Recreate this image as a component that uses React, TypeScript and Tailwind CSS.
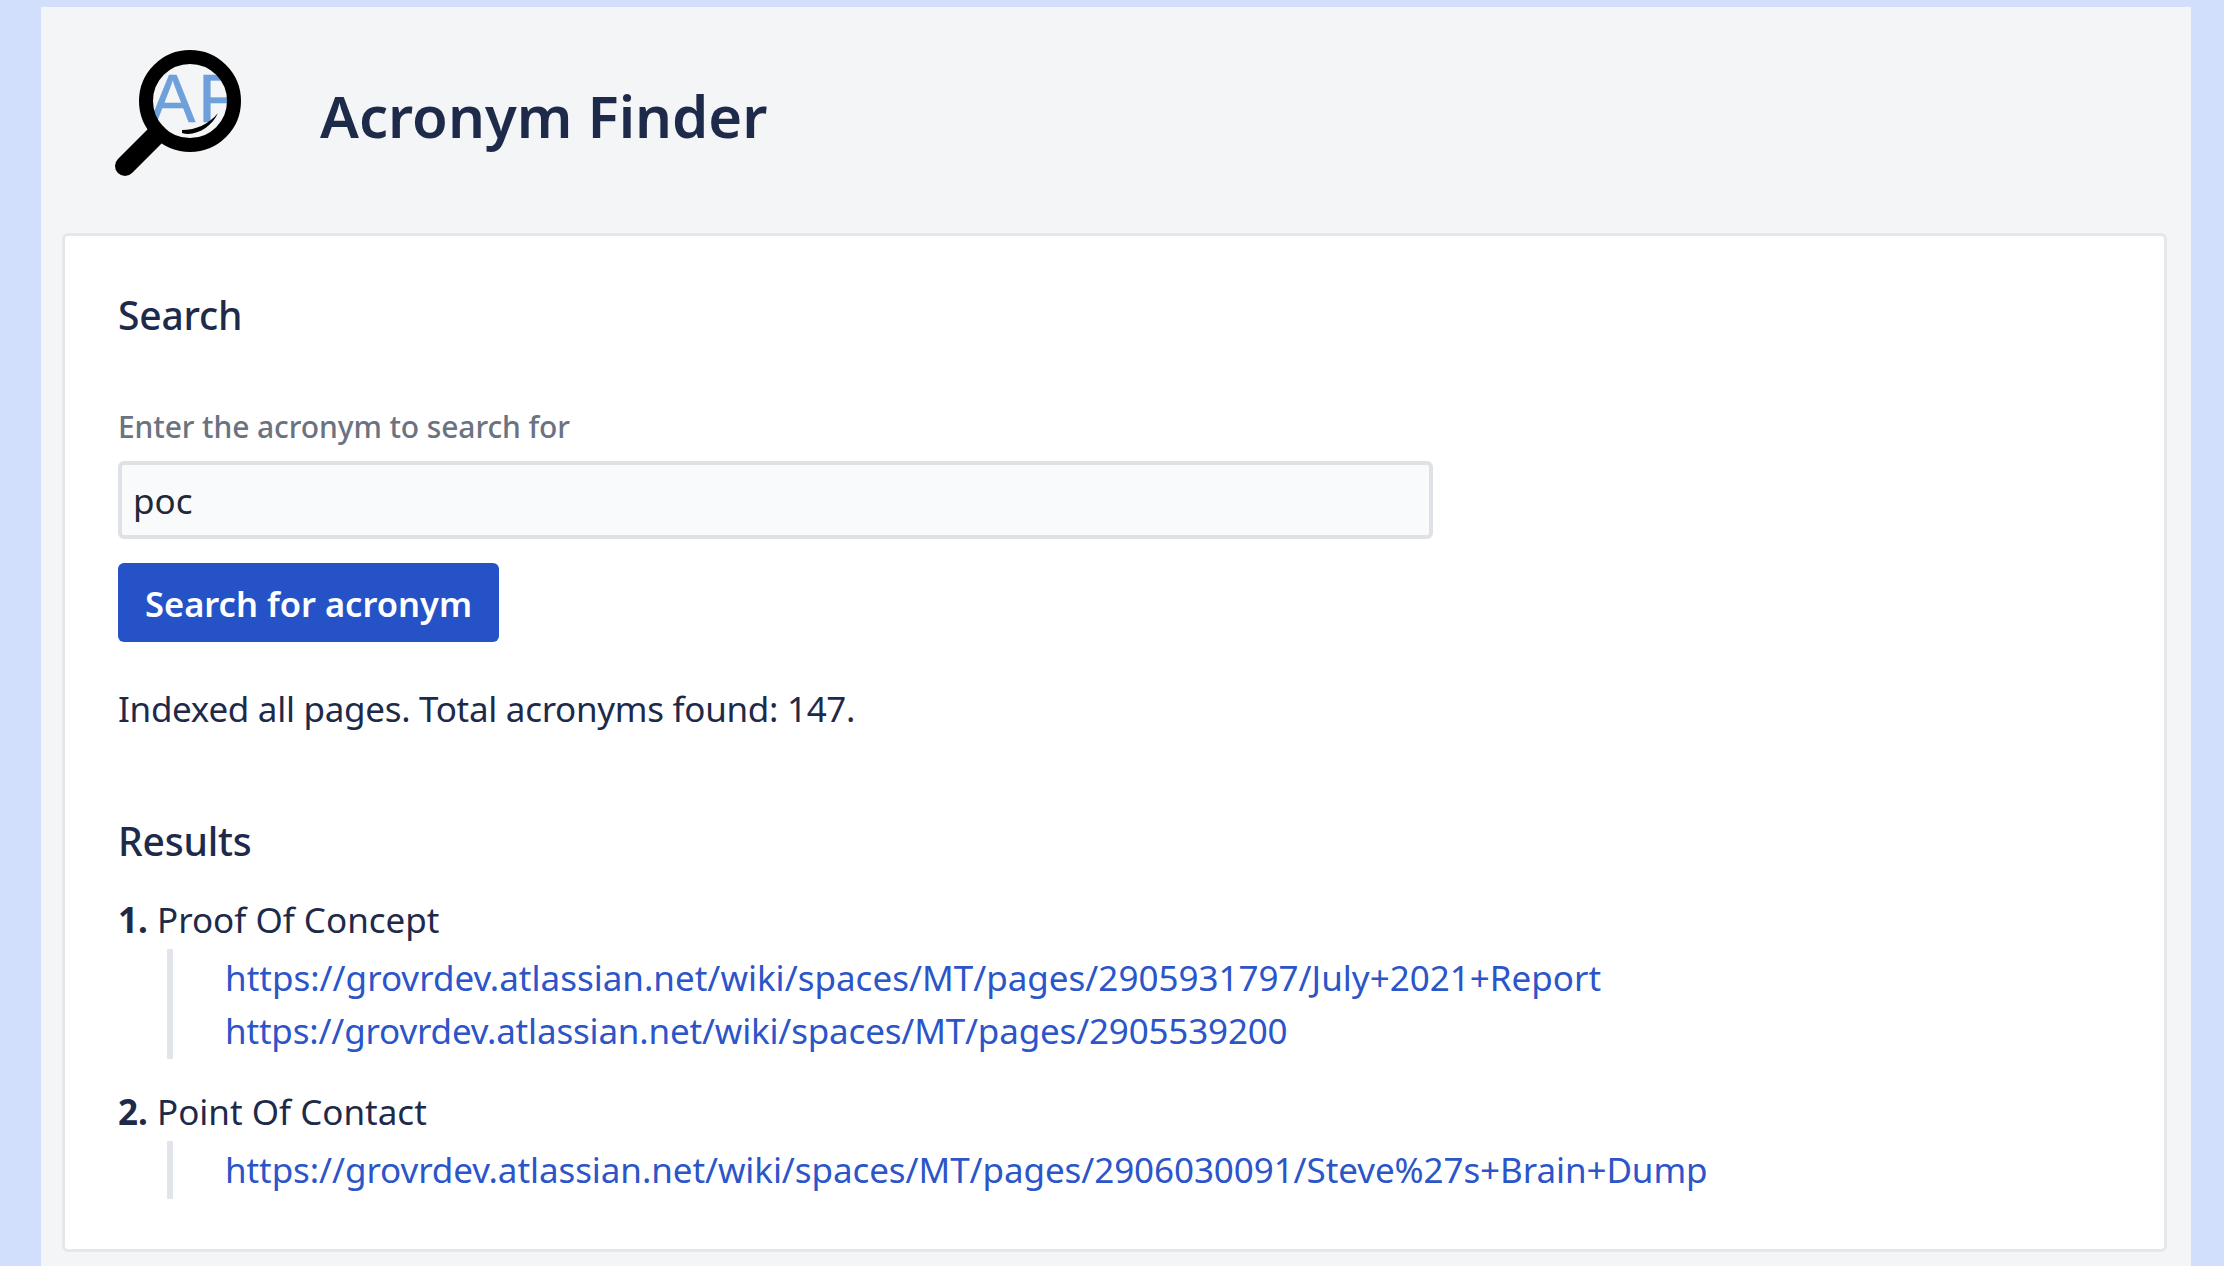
export default function App() {
  return (
    <div className="h-[1266px] overflow-hidden bg-[#d1dffc] pl-[41px] pr-[33px] pt-[7px] font-['Noto_Sans',sans-serif] text-[#1e2a4a]">
      <div className="h-full bg-[#f4f5f7] pl-[21px] pr-[24px]">
        <header className="flex h-[226px] items-center pb-[10px] pl-[49px]">
          <svg width="130" height="130" viewBox="0 0 130 130" className="mb-[12px] mr-[79px] shrink-0 overflow-visible">
            <defs>
              <clipPath id="lens"><circle cx="79" cy="57" r="38" /></clipPath>
            </defs>
            <g clipPath="url(#lens)">
              <text x="39" y="78" fontFamily="Liberation Sans" fontSize="68" letterSpacing="3" fill="#6ea0db" stroke="#6ea0db" strokeWidth="0.6">AF</text>
            </g>
            <circle cx="79" cy="57" r="44" fill="none" stroke="#000" strokeWidth="14" />
            <path d="M46 90 L14 122" stroke="#000" strokeWidth="20" strokeLinecap="round" />
            <path d="M71 86 C85 86 98 80 107 69 C101 83 84 93 71 89 Z" fill="#000" />
          </svg>
          <h1 className="pt-[2px] text-[58px] font-semibold leading-none">Acronym Finder</h1>
        </header>
        <main className="h-[1019px] rounded-[6px] border-[3px] border-[#e5e7eb] bg-white pl-[53px] pt-[54px]">
          <h2 className="text-[39px] font-medium leading-[50px] tracking-[-0.2px]">Search</h2>
          <label className="mt-[67px] block text-[30px] font-medium leading-[40px] tracking-[-0.1px] text-[#6b7280]">Enter the acronym to search for</label>
          <div className="mt-[14px] flex h-[78px] w-[1315px] items-center rounded-[6px] border-[4px] border-[#dfe1e7] bg-[#f9fafb] pl-[11px] pt-[3px] text-[35px] text-[#1f2937]">poc</div>
          <button className="mt-[24px] block h-[79px] w-[381px] rounded-[6px] bg-[#2553c7] pt-[2px] text-[34.5px] font-semibold text-white">Search for acronym</button>
          <p className="mt-[44px] text-[35px] leading-[46px] tracking-[-0.3px]">Indexed all pages. Total acronyms found: 147.</p>
          <h2 className="mt-[84px] text-[39px] font-medium leading-[50px] tracking-[-0.2px]">Results</h2>
          <section className="mt-[31px]">
            <p className="text-[35px] leading-[46px]"><b className="font-bold">1.</b> Proof Of Concept</p>
            <div className="ml-[49px] mt-[6px] flex h-[110px] flex-col justify-center gap-[7px] border-l-[6px] border-[#e2e4ec] pl-[52px] text-[35px] leading-[46px] text-[#2b55c8]">
              <a>https://grovrdev.atlassian.net/wiki/spaces/MT/pages/2905931797/July+2021+Report</a>
              <a className="tracking-[-0.18px]">https://grovrdev.atlassian.net/wiki/spaces/MT/pages/2905539200</a>
            </div>
          </section>
          <section className="mt-[30px]">
            <p className="text-[35px] leading-[46px]"><b className="font-bold">2.</b> Point Of Contact</p>
            <div className="ml-[49px] mt-[6px] flex h-[58px] flex-col justify-center border-l-[6px] border-[#e2e4ec] pl-[52px] text-[35px] leading-[46px] tracking-[-0.08px] text-[#2b55c8]">
              <a>https://grovrdev.atlassian.net/wiki/spaces/MT/pages/2906030091/Steve%27s+Brain+Dump</a>
            </div>
          </section>
        </main>
      </div>
    </div>
  );
}
